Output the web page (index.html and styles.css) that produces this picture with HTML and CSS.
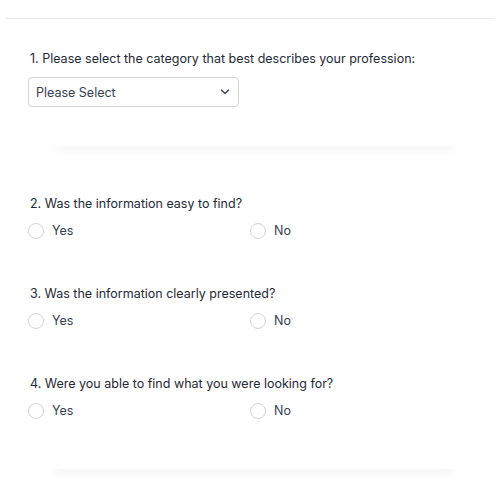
FILE: index.html
```html
<!DOCTYPE html>
<html>
<head>
 <meta charset="utf-8">
 <meta name="viewport" content="width=device-width, initial-scale=1.0">
 <title>Feedback Survey</title>
 <link rel="stylesheet" href="styles.css">
</head>
<body>
<div class="TopRule"></div>

<form class="SurveyForm">
 <div class="Question">
  <label class="QuestionLabel" for="profession">1. Please select the category that best describes your profession:</label>
  <div class="SelectBox">
   <select id="profession" name="profession">
    <option>Please Select</option>
   </select>
   <svg class="SelectArrow" width="10" height="6" viewBox="0 0 10 6"><path d="M1.5 1.2 L5 4.5 L8.5 1.2" fill="none" stroke="#4b5563" stroke-width="1.6" stroke-linecap="round" stroke-linejoin="round"/></svg>
  </div>
 </div>

 <div class="SectionShadow"></div>

 <div class="Question QuestionRadio">
  <div class="QuestionLabel">2. Was the information easy to find?</div>
  <div class="RadioRow">
   <label class="RadioOption"><input type="radio" name="q2" value="yes"><span>Yes</span></label>
   <label class="RadioOption"><input type="radio" name="q2" value="no"><span>No</span></label>
  </div>
 </div>

 <div class="Question QuestionRadio">
  <div class="QuestionLabel">3. Was the information clearly presented?</div>
  <div class="RadioRow">
   <label class="RadioOption"><input type="radio" name="q3" value="yes"><span>Yes</span></label>
   <label class="RadioOption"><input type="radio" name="q3" value="no"><span>No</span></label>
  </div>
 </div>

 <div class="Question QuestionRadio">
  <div class="QuestionLabel">4. Were you able to find what you were looking for?</div>
  <div class="RadioRow">
   <label class="RadioOption"><input type="radio" name="q4" value="yes"><span>Yes</span></label>
   <label class="RadioOption"><input type="radio" name="q4" value="no"><span>No</span></label>
  </div>
 </div>

 <div class="SectionShadow SectionShadowLast"></div>
</form>
</body>
</html>
```

FILE: styles.css
```css
body {
 margin:0;
 background:#ffffff;
 font-family:Inter, "Noto Sans", Arial, sans-serif;
 color:#1f2937;
}

.TopRule {
 height:1px;
 margin:18px 6px 0 6px;
 background:#e5e7eb;
}

.SurveyForm {
 padding:31px 28px 30px 28px;
}

.QuestionLabel {
 display:block;
 padding-left:2px;
 font-size:12.5px;
 line-height:18px;
 color:#1f2937;
}

/* Dropdown */
.SelectBox {
 position:relative;
 width:211px;
 margin-top:9px;
}
.SelectBox select {
 width:100%;
 height:30px;
 padding:0 24px 0 7px;
 border:1px solid #d1d5db;
 border-radius:4px;
 background:#ffffff;
 font-family:inherit;
 font-size:12.5px;
 color:#374151;
 -webkit-appearance:none;
 appearance:none;
 outline:none;
}
.SelectArrow {
 position:absolute;
 right:9px;
 top:12px;
 pointer-events:none;
}

/* Faded shadow between sections */
.SectionShadow {
 position:relative;
 height:10px;
 margin:29px 14px 0 22px;
 background:#ffffff;
 box-shadow:0 6px 9px -4px rgba(0,0,0,0.16);
}
.SectionShadowLast {
 margin-top:39px;
}

/* Yes / No questions */
.QuestionRadio {
 margin-top:45px;
}
.SectionShadow + .QuestionRadio {
 margin-top:49px;
}
.RadioRow {
 display:grid;
 grid-template-columns:1fr 1fr;
 margin-top:9px;
}
.RadioOption {
 display:flex;
 align-items:center;
 gap:8px;
 font-size:12.5px;
 line-height:18px;
 color:#374151;
}
.RadioOption input {
 -webkit-appearance:none;
 appearance:none;
 width:16px;
 height:16px;
 margin:0;
 border:1px solid #d1d5db;
 border-radius:50%;
 background:#ffffff;
}
```
